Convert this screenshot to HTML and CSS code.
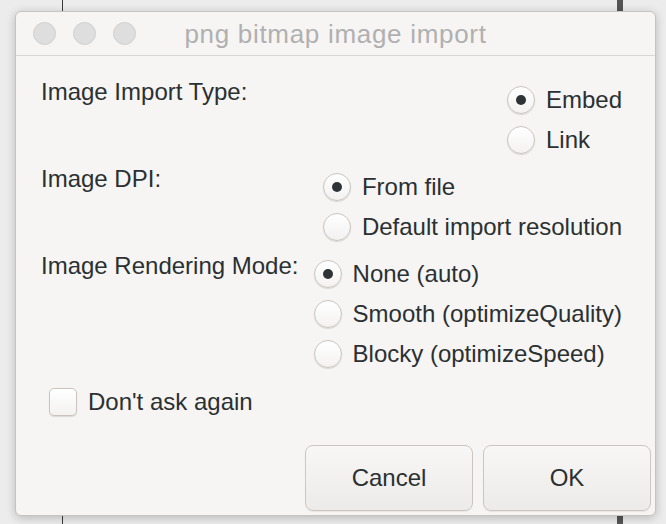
FILE: index.html
```html
<!DOCTYPE html>
<html lang="en">

<head>
    <meta charset="UTF-8">
    <meta name="viewport" content="width=device-width, initial-scale=1.0">
    <title>png bitmap image import</title>
    <link rel="stylesheet" href="styles.css">
</head>

<body>

    <!-- Dialog Window -->
    <div class="window">
        <!-- Title Bar -->
        <div class="titlebar">
            <div class="lights">
                <span class="light"></span>
                <span class="light"></span>
                <span class="light"></span>
            </div>
            <div class="title">png bitmap image import</div>
            <div></div>
        </div>

        <!-- Options -->
        <div class="content">
            <div class="form">
                <div class="label">Image Import Type:</div>
                <div class="options">
                    <div class="option"><span class="radio checked"></span>Embed</div>
                    <div class="option"><span class="radio"></span>Link</div>
                </div>

                <div class="label">Image DPI:</div>
                <div class="options">
                    <div class="option"><span class="radio checked"></span>From file</div>
                    <div class="option"><span class="radio"></span>Default import resolution</div>
                </div>

                <div class="label">Image Rendering Mode:</div>
                <div class="options">
                    <div class="option"><span class="radio checked"></span>None (auto)</div>
                    <div class="option"><span class="radio"></span>Smooth (optimizeQuality)</div>
                    <div class="option"><span class="radio"></span>Blocky (optimizeSpeed)</div>
                </div>
            </div>

            <div class="option check-row"><span class="checkbox"></span>Don't ask again</div>
        </div>

        <!-- Buttons -->
        <div class="footer">
            <button class="btn">Cancel</button>
            <button class="btn">OK</button>
        </div>
    </div>

</body>

</html>
```

FILE: styles.css
```css
body {
    font-family: "Liberation Sans", Arial, sans-serif;
    margin: 0;
    padding: 11px 10px 0 15px;
    height: 524px;
    box-sizing: border-box;
    overflow: hidden;
    color: #2b3032;
    background:
        linear-gradient(to right, transparent 62px, #3a3a3a 62px, #3a3a3a 63px, transparent 63px),
        linear-gradient(to right, transparent 617px, #555 617px, #555 623px, transparent 623px),
        #ececec;
}

.window {
    width: 641px;
    height: 505px;
    box-sizing: border-box;
    display: flex;
    flex-direction: column;
    background-color: #f6f5f4;
    border: 1px solid #c4c4c4;
    border-radius: 6px;
    box-shadow: 0 2px 10px rgba(0, 0, 0, 0.22);
}

.titlebar {
    height: 43px;
    display: grid;
    grid-template-columns: 1fr auto 1fr;
    align-items: center;
    border-bottom: 1px solid #d9d5d1;
}

.lights {
    display: flex;
    gap: 17px;
    padding-left: 17px;
}

.light {
    width: 23px;
    height: 23px;
    box-sizing: border-box;
    border-radius: 50%;
    background-color: #dedede;
    border: 1px solid #d0d0d0;
}

.title {
    font-size: 26px;
    letter-spacing: 0.7px;
    color: #b0b0b0;
    padding-top: 1px;
}

.content {
    padding: 24px 33px 0 25px;
    font-size: 24px;
}

.form {
    display: grid;
    grid-template-columns: auto 1fr;
    row-gap: 7px;
}

.label {
    line-height: 24px;
}

.options {
    justify-self: end;
    display: flex;
    flex-direction: column;
}

.option {
    height: 40px;
    display: flex;
    align-items: center;
    gap: 11px;
}

.radio,
.checkbox {
    width: 28px;
    height: 28px;
    box-sizing: border-box;
    display: flex;
    align-items: center;
    justify-content: center;
    background: linear-gradient(#ffffff, #f3f2f1);
    border: 1px solid #cbc4be;
    box-shadow: 0 1px 1px rgba(0, 0, 0, 0.12);
}

.radio {
    border-radius: 50%;
}

.radio.checked::after {
    content: "";
    width: 10px;
    height: 10px;
    border-radius: 50%;
    background-color: #2e3436;
}

.checkbox {
    border-radius: 5px;
}

.check-row {
    margin-top: 8px;
    padding-left: 8px;
}

.footer {
    margin-top: auto;
    display: flex;
    justify-content: flex-end;
    gap: 10px;
    padding: 0 4px 4px;
}

.btn {
    width: 168px;
    height: 66px;
    font-family: inherit;
    font-size: 24px;
    color: #2b3032;
    background: linear-gradient(#f8f7f6, #edebe9);
    border: 1px solid #cdc6c0;
    border-radius: 8px;
    box-shadow: 0 1px 1px rgba(0, 0, 0, 0.06);
}
```
